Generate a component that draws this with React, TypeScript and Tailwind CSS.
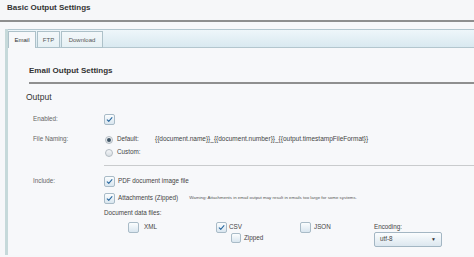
import React from "react";

const Box = ({ checked = false, small = false }: { checked?: boolean; small?: boolean }) => (
  <span
    className={
      (small ? "h-[10px] w-[10px]" : "h-[11px] w-[11px]") +
      " inline-flex shrink-0 items-center justify-center rounded-[2px] border border-[#a9bbc7] bg-linear-to-b from-[#fbfdfe] to-[#d9e6ef]"
    }
  >
    {checked && (
      <svg viewBox="0 0 11 11" className="h-[11px] w-[11px]">
        <path d="M2.7 5.9 L4.6 7.8 L8.5 3.2" fill="none" stroke="#2c6aa0" strokeWidth="1.3" strokeLinecap="round" strokeLinejoin="round" />
      </svg>
    )}
  </span>
);

const Radio = ({ checked = false }: { checked?: boolean }) => (
  <span className="inline-flex h-[8px] w-[8px] shrink-0 items-center justify-center rounded-full border border-[#b4bcc2] bg-linear-to-b from-[#f4f6f8] to-[#d8dee3]">
    {checked && <span className="h-[4px] w-[4px] rounded-full bg-[#3f5566]" />}
  </span>
);

export default function App() {
  return (
    <div
      className="flex h-[257px] w-[474px] flex-col overflow-hidden bg-[#f6f7f9] text-[#444]"
      style={{ fontFamily: '"Liberation Sans", Arial, sans-serif' }}
    >
      <div className="h-[20px] px-[7px] pt-[3px] text-[8px] font-bold leading-[9px] text-[#333]">Basic Output Settings</div>
      <div className="h-[2px] bg-[#8e8e8e]" />
      <div className="h-[7px]" />
      <div className="ml-[5px] flex h-[226px] flex-col border-l-[3px] border-[#c6d9da]">
        <div className="flex h-[19px] items-end gap-[1px] border-y border-[#b3c6ce] bg-linear-to-b from-[#eef6fa] to-[#d9e9f0] text-[6px] leading-none">
          <div className="-mb-px flex h-[17px] w-[28px] items-center justify-center border border-b-0 border-[#adc1c9] bg-[#f7f8fa] text-[#333]">Email</div>
          <div className="-mb-px flex h-[17px] w-[23px] items-center justify-center border border-[#adc1c9] bg-linear-to-b from-[#f3f8fa] to-[#e6f0f4] text-[#555]">FTP</div>
          <div className="-mb-px flex h-[17px] w-[42px] items-center justify-center border border-[#adc1c9] bg-linear-to-b from-[#f3f8fa] to-[#e6f0f4] text-[#555]">Download</div>
        </div>
        <div className="flex flex-1 flex-col bg-[#f7f8fa] pl-[21px]">
          <div className="mt-[18px] text-[8px] font-bold leading-[9px] text-[#333]">Email Output Settings</div>
          <div className="mt-[7px] h-[2px] bg-[#8f8f8f]" />
          <div className="-ml-[3px] mt-[8px] text-[8.5px] leading-[10px] text-[#333]">Output</div>

          <div className="ml-[4px] flex flex-col text-[6.3px] leading-none">
            {/* Enabled */}
            <div className="mt-[10px] flex h-[14px] items-center">
              <div className="w-[71px] text-[#666]">Enabled:</div>
              <Box checked />
            </div>
            {/* File naming */}
            <div className="mt-[7px] flex">
              <div className="flex h-[13px] w-[71px] items-center text-[#666]">File Naming:</div>
              <div className="flex flex-col">
                <div className="flex h-[13px] items-center">
                  <span className="ml-[1px] flex"><Radio checked /></span>
                  <span className="ml-[4px] w-[38px]">Default:</span>
                  <span className="text-[6.5px]">{"{{document.name}}_{{document.number}}_{{output.timestampFileFormat}}"}</span>
                </div>
                <div className="flex h-[13px] items-center">
                  <span className="ml-[1px] flex"><Radio /></span>
                  <span className="ml-[4px]">Custom:</span>
                </div>
              </div>
            </div>
            <div className="ml-[71px] mt-[6px] h-px bg-[#c9cbcd]" />
            {/* Include */}
            <div className="mt-[8px] flex">
              <div className="flex h-[14px] w-[71px] items-center text-[#666]">Include:</div>
              <div className="flex flex-1 flex-col">
                <div className="flex h-[14px] items-center gap-[3px]">
                  <Box checked />
                  <span>PDF document image file</span>
                </div>
                <div className="mt-[3px] flex h-[14px] items-center gap-[3px]">
                  <Box checked />
                  <span>Attachments (Zipped)</span>
                  <span className="ml-[8px] text-[4.4px] text-[#555]">
                    Warning: Attachments in email output may result in emails too large for some systems.
                  </span>
                </div>
                <div className="mt-[3px] flex h-[10px] items-center">Document data files:</div>
                <div className="mt-[3px] grid grid-cols-[112px_84px_74px_80px]">
                  <div className="ml-[24px] flex h-[12px] items-center gap-[5px]">
                    <Box />
                    <span>XML</span>
                  </div>
                  <div className="flex flex-col">
                    <div className="flex h-[12px] items-center gap-[2px]">
                      <Box checked />
                      <span>CSV</span>
                    </div>
                    <div className="ml-[15px] flex h-[10px] items-center gap-[3px]">
                      <Box small />
                      <span>Zipped</span>
                    </div>
                  </div>
                  <div className="flex h-[12px] items-center gap-[3px]">
                    <Box />
                    <span>JSON</span>
                  </div>
                  <div className="flex flex-col">
                    <div className="flex h-[10px] items-center pt-[2px]">Encoding:</div>
                    <div className="mt-[1px] flex h-[15px] w-[68px] items-center justify-between rounded-[2px] border border-[#a3b6c3] bg-linear-to-b from-[#fbfdfe] to-[#dce7ef] px-[5px]">
                      <span>utf-8</span>
                      <span className="text-[5px] text-[#333]">▼</span>
                    </div>
                  </div>
                </div>
              </div>
            </div>
          </div>
        </div>
      </div>
    </div>
  );
}
